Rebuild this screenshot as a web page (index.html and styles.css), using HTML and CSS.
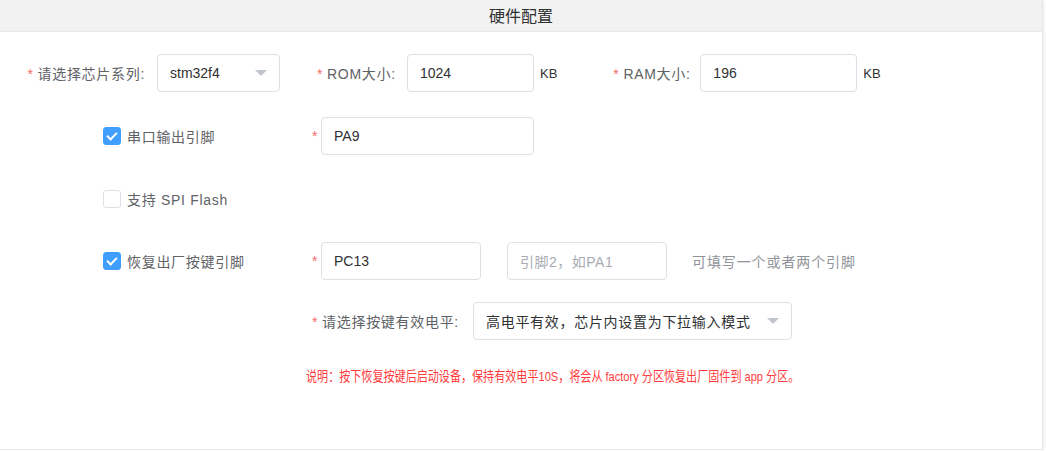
FILE: index.html
```html
<!DOCTYPE html>
<html lang="zh-CN">
<head>
    <meta charset="UTF-8">
    <meta name="viewport" content="width=device-width, initial-scale=1.0">
    <title>硬件配置</title>
    <link rel="stylesheet" href="styles.css">
</head>
<body>

    <div class="card">
        <div class="card-header">硬件配置</div>

        <div class="card-body">
            <!-- chip / memory -->
            <div class="form-row row-chip">
                <div class="form-item">
                    <label class="form-label label-chip"><span class="req">*</span> 请选择芯片系列:</label>
                    <div class="select select-chip">
                        <span class="select-value">stm32f4</span>
                        <span class="caret"></span>
                    </div>
                </div>
                <div class="form-item item-rom">
                    <label class="form-label label-rom"><span class="req">*</span> ROM大小:</label>
                    <div class="input input-rom">1024</div>
                    <span class="unit">KB</span>
                </div>
                <div class="form-item item-ram">
                    <label class="form-label label-ram"><span class="req">*</span> RAM大小:</label>
                    <div class="input input-ram">196</div>
                    <span class="unit">KB</span>
                </div>
            </div>

            <!-- uart pin -->
            <div class="form-row row-pin">
                <label class="checkbox">
                    <span class="box checked"></span>
                    <span class="checkbox-text">串口输出引脚</span>
                </label>
                <span class="req pin-req">*</span>
                <div class="input input-pin">PA9</div>
            </div>

            <!-- spi flash -->
            <div class="form-row row-pin row-spi">
                <label class="checkbox">
                    <span class="box"></span>
                    <span class="checkbox-text">支持 SPI Flash</span>
                </label>
            </div>

            <!-- reset key -->
            <div class="form-row row-pin row-key">
                <label class="checkbox">
                    <span class="box checked"></span>
                    <span class="checkbox-text">恢复出厂按键引脚</span>
                </label>
                <span class="req pin-req">*</span>
                <div class="input input-key">PC13</div>
                <div class="input input-key2 placeholder">引脚2，如PA1</div>
                <span class="tip">可填写一个或者两个引脚</span>
            </div>

            <div class="form-row row-sub row-level">
                <label class="form-label label-level"><span class="req">*</span> 请选择按键有效电平:</label>
                <div class="select select-level">
                    <span class="select-value cn">高电平有效，芯片内设置为下拉输入模式</span>
                    <span class="caret"></span>
                </div>
            </div>

            <div class="form-row row-sub row-note">
                <p class="note">说明：按下恢复按键后启动设备，保持有效电平10S，将会从 factory 分区恢复出厂固件到 app 分区。</p>
            </div>
        </div>
    </div>

</body>
</html>
```

FILE: styles.css
```css
body, html {
    margin: 0;
    padding: 0;
    font-family: "Liberation Sans", "Noto Sans CJK SC", sans-serif;
    background-color: #fff;
    font-size: 14px;
}
.card {
    width: 1043px;
    height: 450px;
    box-sizing: border-box;
    border-right: 1px solid #e4e7ed;
    border-bottom: 1px solid #e4e7ed;
    box-shadow: 1px 1px 3px rgba(0, 0, 0, 0.08);
    background: #fff;
}
.card-header {
    height: 31px;
    line-height: 31px;
    background-color: #f2f2f2;
    border-bottom: 1px solid #e4e7ed;
    text-align: center;
    font-size: 16px;
    color: #303133;
    font-family: "Noto Sans CJK SC", sans-serif;
}
.card-body {
    padding-top: 22px;
}
.form-row {
    display: flex;
    align-items: center;
    height: 38px;
    margin-bottom: 25px;
}
.row-chip {
    padding-left: 27px;
}
.form-item {
    display: flex;
    align-items: center;
}
.item-rom {
    margin-left: 37px;
}
.item-ram {
    margin-left: 56px;
}
.form-label {
    color: #606266;
    box-sizing: border-box;
    padding-right: 12px;
    white-space: nowrap;
    text-align: right;
    letter-spacing: 0.7px;
}
.req {
    color: #f56c6c;
    letter-spacing: 0;
}
.label-chip {
    width: 130px;
}
.label-rom {
    width: 90px;
}
.label-ram {
    width: 87px;
}
.input, .select {
    height: 38px;
    box-sizing: border-box;
    border: 1px solid #dcdfe6;
    border-radius: 4px;
    padding: 0 12px;
    display: flex;
    align-items: center;
    color: #303133;
    background: #fff;
}
.select {
    justify-content: space-between;
}
.caret {
    width: 0;
    height: 0;
    border-left: 6px solid transparent;
    border-right: 6px solid transparent;
    border-top: 6px solid #c0c4cc;
}
.select-chip {
    width: 123px;
}
.input-rom {
    width: 127px;
}
.input-ram {
    width: 157px;
}
.unit {
    margin-left: 6px;
    color: #303133;
    font-size: 13px;
}
.cn {
    letter-spacing: 0.7px;
}

/* checkbox rows */
.row-pin {
    padding-left: 103px;
}
.row-spi {
    margin-bottom: 24px;
}
.checkbox {
    width: 209px;
    display: flex;
    align-items: center;
    color: #606266;
}
.checkbox-text {
    letter-spacing: 0.7px;
}
.box {
    width: 18px;
    height: 18px;
    box-sizing: border-box;
    border: 1px solid #dcdfe6;
    border-radius: 3px;
    margin-right: 6px;
    position: relative;
    background: #fff;
}
.box.checked {
    background: #409eff;
    border-color: #409eff;
}
.box.checked::after {
    content: "";
    position: absolute;
    left: 5px;
    top: 2px;
    width: 4px;
    height: 8px;
    border: solid #fff;
    border-width: 0 2px 2px 0;
    transform: rotate(45deg);
}
.pin-req {
    width: 9px;
}
.input-pin {
    width: 213px;
}
.input-key {
    width: 160px;
}
.input-key2 {
    width: 160px;
    margin-left: 26px;
}
.placeholder {
    color: #a8abb2;
    letter-spacing: 0.5px;
}
.tip {
    margin-left: 25px;
    color: #909399;
    letter-spacing: 0.9px;
}
.row-key {
    margin-bottom: 22px;
}

/* sub rows under reset key */
.row-sub {
    padding-left: 312px;
}
.row-level {
    margin-bottom: 16px;
}
.label-level {
    width: 161px;
    text-align: left;
}
.select-level {
    width: 319px;
}
.note {
    margin: 0 0 0 -6px;
    color: #ff3b3b;
    font-size: 13.5px;
    white-space: nowrap;
    transform: scaleX(0.82);
    transform-origin: left center;
}
```
